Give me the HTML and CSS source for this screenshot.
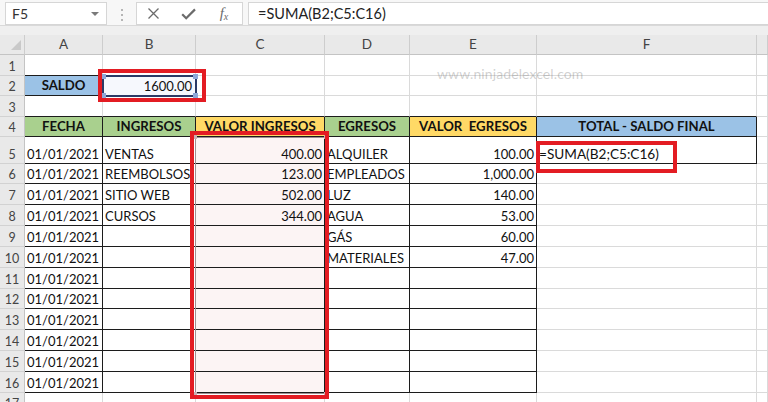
FILE: index.html
```html
<!DOCTYPE html>
<html>
<head>
<meta charset="utf-8">
<link rel="stylesheet" href="styles.css">
</head>
<body>
<div class="app">
  <div class="fbar">
    <div class="namebox"><span>F5</span><span class="caret"></span></div>
    <div class="grip"><i></i><i></i><i></i></div>
    <div class="btns">
      <span class="slot s1"><svg width="13" height="13" viewBox="0 0 13 13"><path d="M1.5 1.5L11.5 11.5M11.5 1.5L1.5 11.5" stroke="#6b6b6b" stroke-width="1.3" fill="none"/></svg></span>
      <span class="slot s2"><svg width="15" height="12" viewBox="0 0 15 12"><path d="M1.2 6.2L5.2 10.2L14 1.4" stroke="#6b6b6b" stroke-width="2.2" fill="none"/></svg></span>
      <span class="slot s3"><span class="fx">f<span class="fxx">x</span></span></span>
    </div>
    <div class="formula">=SUMA(B2;C5:C16)</div>
  </div>
  <div class="band"></div>
  <div class="sheet">
    <div class="c h corner"><span class="tri"></span></div><div class="c h">A</div><div class="c h">B</div><div class="c h">C</div><div class="c h">D</div><div class="c h">E</div><div class="c h">F</div><div class="c h"></div>

    <div class="c rh">1</div><div class="c kb"></div><div class="c"></div><div class="c"></div><div class="c"></div><div class="c"></div><div class="c"></div><div class="c"></div>

    <div class="c rh">2</div><div class="c k blue b ctr">SALDO</div><div class="c r selb">1600.00</div><div class="c"></div><div class="c"></div><div class="c"></div><div class="c"></div><div class="c"></div>

    <div class="c rh">3</div><div class="c kb"></div><div class="c kb"></div><div class="c kb"></div><div class="c kb"></div><div class="c kb"></div><div class="c kb"></div><div class="c"></div>

    <div class="c rh">4</div><div class="c k green b ctr">FECHA</div><div class="c k green b ctr">INGRESOS</div><div class="c k yellow b ctr">VALOR INGRESOS</div><div class="c k green b ctr">EGRESOS</div><div class="c k yellow b ctr">VALOR&nbsp; EGRESOS</div><div class="c k blue b ctr">TOTAL - SALDO FINAL</div><div class="c"></div>

    <div class="c rh">5</div><div class="c k">01/01/2021</div><div class="c k">VENTAS</div><div class="c k r sel">400.00</div><div class="c k">ALQUILER</div><div class="c k r">100.00</div><div class="c k fcell">=SUMA(B2;C5:C16)</div><div class="c"></div>

    <div class="c rh">6</div><div class="c k">01/01/2021</div><div class="c k">REEMBOLSOS</div><div class="c k r sel">123.00</div><div class="c k">EMPLEADOS</div><div class="c k r">1,000.00</div><div class="c"></div><div class="c"></div>

    <div class="c rh">7</div><div class="c k">01/01/2021</div><div class="c k">SITIO WEB</div><div class="c k r sel">502.00</div><div class="c k">LUZ</div><div class="c k r">140.00</div><div class="c"></div><div class="c"></div>

    <div class="c rh">8</div><div class="c k">01/01/2021</div><div class="c k">CURSOS</div><div class="c k r sel">344.00</div><div class="c k">AGUA</div><div class="c k r">53.00</div><div class="c"></div><div class="c"></div>

    <div class="c rh">9</div><div class="c k">01/01/2021</div><div class="c k"></div><div class="c k sel"></div><div class="c k">GÁS</div><div class="c k r">60.00</div><div class="c"></div><div class="c"></div>

    <div class="c rh">10</div><div class="c k">01/01/2021</div><div class="c k"></div><div class="c k sel"></div><div class="c k">MATERIALES</div><div class="c k r">47.00</div><div class="c"></div><div class="c"></div>

    <div class="c rh">11</div><div class="c k">01/01/2021</div><div class="c k"></div><div class="c k sel"></div><div class="c k"></div><div class="c k"></div><div class="c"></div><div class="c"></div>

    <div class="c rh">12</div><div class="c k">01/01/2021</div><div class="c k"></div><div class="c k sel"></div><div class="c k"></div><div class="c k"></div><div class="c"></div><div class="c"></div>

    <div class="c rh">13</div><div class="c k">01/01/2021</div><div class="c k"></div><div class="c k sel"></div><div class="c k"></div><div class="c k"></div><div class="c"></div><div class="c"></div>

    <div class="c rh">14</div><div class="c k">01/01/2021</div><div class="c k"></div><div class="c k sel"></div><div class="c k"></div><div class="c k"></div><div class="c"></div><div class="c"></div>

    <div class="c rh">15</div><div class="c k">01/01/2021</div><div class="c k"></div><div class="c k sel"></div><div class="c k"></div><div class="c k"></div><div class="c"></div><div class="c"></div>

    <div class="c rh">16</div><div class="c k">01/01/2021</div><div class="c k"></div><div class="c k sel"></div><div class="c k"></div><div class="c k"></div><div class="c"></div><div class="c"></div>

    <div class="c rh">17</div><div class="c"></div><div class="c"></div><div class="c"></div><div class="c"></div><div class="c"></div><div class="c"></div><div class="c"></div>
  </div>

  <div class="watermark">www.ninjadelexcel.com</div>
  <div class="ref-b2"><i class="hd tl"></i><i class="hd tr"></i><i class="hd bl"></i><i class="hd br"></i></div>
  <div class="ref-c"><i class="hd tl"></i><i class="hd tr"></i><i class="hd bl"></i><i class="hd br"></i></div>
  <div class="redbox rb1"></div>
  <div class="redbox rb2"></div>
  <div class="redbox rb3"></div>
</div>
</body>
</html>
```

FILE: styles.css
```css
* { box-sizing: border-box; }
html, body { margin: 0; padding: 0; }
body {
  width: 768px;
  height: 402px;
  overflow: hidden;
  background: #fff;
  font-family: Lato, "Open Sans", "DejaVu Sans", sans-serif;
}
.app {
  position: relative;
  width: 768px;
  height: 402px;
  overflow: hidden;
}

/* formula bar */
.fbar {
  height: 26px;
  background: #f7f7f7;
  border-bottom: 1px solid #d9d9d9;
  display: flex;
  align-items: flex-start;
  padding-top: 2px;
}
.namebox {
  margin-left: 5px;
  width: 102px;
  height: 23px;
  background: #fff;
  border: 1px solid #d6d6d6;
  display: flex;
  align-items: center;
  justify-content: space-between;
  padding: 0 7px 0 6px;
  font-size: 14px;
  color: #333;
}
.caret {
  width: 0;
  height: 0;
  border-left: 4px solid transparent;
  border-right: 4px solid transparent;
  border-top: 4px solid #7a7a7a;
}
.grip {
  width: 29px;
  height: 23px;
  display: flex;
  flex-direction: column;
  align-items: center;
  gap: 3px;
  padding-top: 7px;
}
.grip i {
  display: block;
  width: 2px;
  height: 2px;
  background: #b5b5b5;
}
.btns {
  width: 107px;
  height: 23px;
  background: #fff;
  border: 1px solid #d6d6d6;
  display: flex;
  align-items: center;
}
.slot {
  display: flex;
  align-items: center;
  justify-content: center;
  height: 21px;
}
.s1 { width: 33px; }
.s2 { width: 36px; }
.s3 { width: 36px; }
.fx {
  font-family: "Liberation Serif", "DejaVu Serif", serif;
  font-style: italic;
  font-size: 15px;
  color: #6b6b6b;
  line-height: 1;
}
.fxx {
  font-size: 10px;
  position: relative;
  top: 2px;
}
.formula {
  margin-left: 5px;
  flex: 1;
  height: 23px;
  background: #fff;
  border: 1px solid #d6d6d6;
  border-right: none;
  padding-left: 9px;
  font-size: 14.5px;
  display: flex;
  align-items: center;
  color: #222;
}
.band {
  height: 9px;
  background: #efefef;
}

/* sheet grid */
.sheet {
  display: grid;
  grid-template-columns: 25px 78px 93px 129px 85px 127px 220px 11px;
  grid-template-rows: 20px 20.5px 20.5px 20.5px 20.5px 26.5px repeat(11, 20.85px) 20px;
}
.c {
  border-right: 1px solid #dadada;
  border-bottom: 1px solid #dadada;
  padding: 0 2px 0 2px;
  display: flex;
  align-items: flex-end;
  font-size: 13px;
  line-height: 17px;
  color: #111;
  white-space: nowrap;
  overflow: hidden;
}
.fcell { font-size: 13.6px; }
.h {
  background: #e9e9e9;
  border-right-color: #cdcdcd;
  border-bottom-color: #c4c4c4;
  justify-content: center;
  align-items: center;
  color: #444;
  font-size: 13.5px;
}
.rh {
  background: #e9e9e9;
  border-right-color: #c4c4c4;
  border-bottom-color: #d2d2d2;
  justify-content: center;
  color: #444;
  font-size: 12.5px;
  padding: 0;
}
.corner {
  position: relative;
}
.tri {
  position: absolute;
  right: 3px;
  bottom: 4px;
  width: 0;
  height: 0;
  border-left: 10px solid transparent;
  border-bottom: 10px solid #c9c9c9;
}
.k { border-right-color: #1c1c1c; border-bottom-color: #1c1c1c; }
.kb { border-bottom-color: #1c1c1c; }
.b { font-weight: 700; font-size: 13.2px; }
.ctr { justify-content: center; align-items: center; }
.r { justify-content: flex-end; }
.green { background: #a9d08e; }
.yellow { background: #ffd966; }
.blue { background: #9bc2e6; }
.sel { background: #fcf4f4; }
.selb { background: #f6f8fd; padding-right: 3px; }

/* overlays */
.watermark {
  position: absolute;
  left: 437px;
  top: 65px;
  font-size: 14px;
  color: rgba(120, 120, 120, 0.35);
  letter-spacing: 0.1px;
}
.ref-b2 {
  position: absolute;
  left: 102px;
  top: 75px;
  width: 95px;
  height: 22px;
  border: 2px solid #2b3a66;
}
.ref-c {
  position: absolute;
  left: 195px;
  top: 137px;
  width: 131px;
  height: 257px;
  border: 1px solid #9e8f92;
}
.hd {
  position: absolute;
  width: 5px;
  height: 5px;
  background: #8fa8d8;
}
.ref-c .hd { background: #c9b0b3; width: 4px; height: 4px; }
.hd.tl { left: -3px; top: -3px; }
.hd.tr { right: -3px; top: -3px; }
.hd.bl { left: -3px; bottom: -3px; }
.hd.br { right: -3px; bottom: -3px; }
.redbox {
  position: absolute;
  border: 4px solid #e31c23;
}
.rb1 { left: 98px; top: 69px; width: 108px; height: 33px; }
.rb2 { left: 190px; top: 131px; width: 139px; height: 268px; }
.rb3 { left: 536px; top: 141px; width: 141px; height: 32px; }
```
